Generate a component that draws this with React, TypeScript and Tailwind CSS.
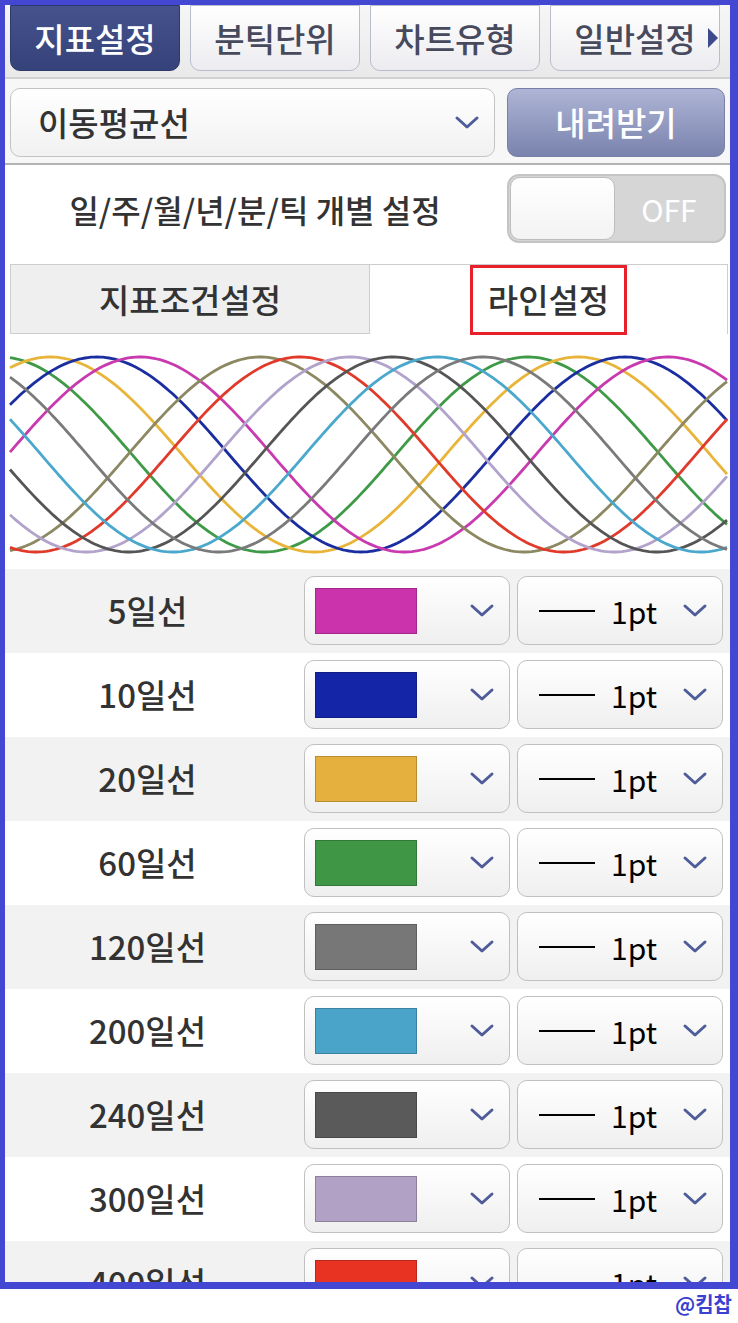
import React from 'react';

const rows = [
  { label: '5일선', color: '#cb33ad' },
  { label: '10일선', color: '#1425a8' },
  { label: '20일선', color: '#e6b03e' },
  { label: '60일선', color: '#3f9746' },
  { label: '120일선', color: '#777777' },
  { label: '200일선', color: '#4aa3c9' },
  { label: '240일선', color: '#5a5a5a' },
  { label: '300일선', color: '#b0a1c5' },
  { label: '400일선', color: '#e83322' },
];

// peak = x position (page px) where each wave reaches its top
const waves = [
  { color: '#3e9a47', peak: 0 },
  { color: '#e8b53a', peak: 50 },
  { color: '#1a2ea0', peak: 97 },
  { color: '#c83aae', peak: 140 },
  { color: '#8c8862', peak: 260 },
  { color: '#e03a2a', peak: 300 },
  { color: '#b1a3cb', peak: 350 },
  { color: '#555555', peak: 393 },
  { color: '#4aa8cc', peak: 437 },
  { color: '#7a7a7a', peak: 483 },
];

function wavePath(peak: number) {
  const pts: string[] = [];
  for (let x = 10; x <= 727; x += 3) {
    const y = 455.5 - 97.5 * Math.cos((2 * Math.PI * (x - peak)) / 528);
    pts.push(`${x - 5},${(y - 335).toFixed(1)}`);
  }
  return 'M' + pts.join(' L');
}

function Chevron() {
  return (
    <svg width="26" height="15" viewBox="0 0 26 15" className="shrink-0">
      <path d="M3 3 L13 12 L23 3" fill="none" stroke="#4e5d9a" strokeWidth="3" strokeLinecap="round" strokeLinejoin="round" />
    </svg>
  );
}

const tabClasses =
  'relative w-[170px] h-[66px] rounded-[10px] rounded-t-none flex items-center justify-center text-[33px] font-medium leading-none';

export default function App() {
  return (
    <div className="w-[738px] min-h-[1323px] bg-white font-['Noto_Sans_CJK_KR','Noto_Sans',sans-serif]">
      <div className="h-[1289px] border-[#4347d1] border-t-[5px] border-l-[5px] border-r-[8px] border-b-[7px] overflow-hidden bg-white">
        {/* top tabs */}
        <div className="h-[74px] flex items-start gap-[10px] pl-[5px] bg-linear-to-b from-[#f6f6f6] to-[#e9e9e9] border-b-2 border-[#d2d2d2]">
          <div className={`${tabClasses} bg-linear-to-b from-[#45528c] to-[#36427a] text-white border border-[#2f3a6c]`}>
            지표설정
          </div>
          <div className={`${tabClasses} bg-linear-to-b from-white to-[#ececf0] text-[#474a5c] border border-[#b9bccc]`}>
            분틱단위
          </div>
          <div className={`${tabClasses} bg-linear-to-b from-white to-[#ececf0] text-[#474a5c] border border-[#b9bccc]`}>
            차트유형
          </div>
          <div className={`${tabClasses} bg-linear-to-b from-white to-[#ececf0] text-[#474a5c] border border-[#b9bccc]`}>
            일반설정
            <span className="absolute right-[1px] top-[22px] w-0 h-0 border-y-[10px] border-y-transparent border-l-[10px] border-l-[#3d4a8c]" />
          </div>
        </div>

        {/* indicator select row */}
        <div className="h-[86px] flex items-start gap-[12px] pt-[9px] pl-[5px] bg-[#f7f7f7] border-b-2 border-[#b4b4b4]">
          <div className="w-[485px] h-[69px] rounded-[10px] border border-[#c3c3c3] bg-linear-to-b from-white to-[#f1f1f1] flex items-center pl-[27px] pr-[14px]">
            <span className="flex-1 text-[33px] font-medium text-[#333] leading-none">이동평균선</span>
            <Chevron />
          </div>
          <div className="w-[218px] h-[69px] rounded-[10px] border border-[#7880a8] bg-linear-to-b from-[#aeb5d6] to-[#7a83ad] flex items-center justify-center text-[33px] font-medium text-white leading-none">
            내려받기
          </div>
        </div>

        {/* individual setting toggle */}
        <div className="h-[99px] flex items-start pt-[9px] pl-[5px]">
          <div className="w-[490px] h-[69px] flex items-center justify-center text-[32px] font-medium text-[#333] leading-none">
            일/주/월/년/분/틱 개별 설정
          </div>
          <div className="ml-[7px] w-[219px] h-[69px] rounded-[12px] bg-[#d6d6d6] border-2 border-[#c4c4c4] flex items-center p-[1px]">
            <div className="w-[105px] h-[63px] rounded-[10px] bg-linear-to-b from-white to-[#f3f3f3] border border-[#bdbdbd]" />
            <span className="flex-1 text-center text-[30px] text-white leading-none">OFF</span>
          </div>
        </div>

        {/* sub tabs */}
        <div className="h-[70px] flex pl-[5px] pr-[2px]">
          <div className="w-[360px] bg-[#efefef] border border-[#cdcdcd] flex items-center justify-center text-[33px] font-medium text-[#333] leading-none">
            지표조건설정
          </div>
          <div className="flex-1 bg-white border-t border-r border-[#cdcdcd] flex items-center justify-center">
            <span className="h-[70px] px-[15px] border-[3px] border-[#e8202a] flex items-center text-[33px] font-medium text-[#333] leading-none">
              라인설정
            </span>
          </div>
        </div>

        {/* line preview */}
        <div className="h-[235px] bg-white">
          <svg width="725" height="235" viewBox="0 0 725 235">
            {waves.map((w) => (
              <path key={w.color} d={wavePath(w.peak)} fill="none" stroke={w.color} strokeWidth="2.8" />
            ))}
          </svg>
        </div>

        {/* line rows */}
        {rows.map((r, i) => (
          <div
            key={r.label}
            className={`h-[84px] flex items-start pt-[7px] ${i % 2 === 0 ? 'bg-[#f2f2f2]' : 'bg-white'}`}
          >
            <div className="w-[285px] h-[69px] flex items-center justify-center text-[33px] font-medium text-[#333] leading-none">
              {r.label}
            </div>
            <div className="ml-[14px] w-[206px] h-[69px] rounded-[10px] border border-[#c0c0c0] bg-linear-to-b from-white to-[#efefef] flex items-center pl-[10px] pr-[14px]">
              <div className="w-[102px] h-[46px] border border-black/20" style={{ backgroundColor: r.color }} />
              <div className="flex-1" />
              <Chevron />
            </div>
            <div className="ml-[7px] w-[206px] h-[69px] rounded-[10px] border border-[#c0c0c0] bg-linear-to-b from-white to-[#efefef] flex items-center pl-[21px] pr-[14px]">
              <div className="w-[56px] h-[2px] bg-black" />
              <span className="ml-[16px] flex-1 text-[30px] text-black leading-none">1pt</span>
              <Chevron />
            </div>
          </div>
        ))}
      </div>
      <div className="flex justify-end pr-[6px] pt-[5px] text-[20px] font-bold text-[#3a40d0] leading-none">@킴찹</div>
    </div>
  );
}
